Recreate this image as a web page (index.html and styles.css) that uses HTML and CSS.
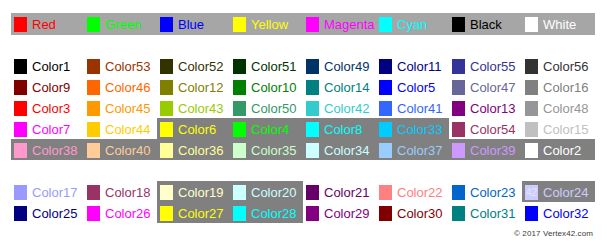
FILE: index.html
```html
<!DOCTYPE html>
<html>
<head>
<meta charset="utf-8">
<title>Excel Color Palette</title>
<link rel="stylesheet" href="styles.css">
</head>
<body>
<div class="sheet">
  <div class="grid bar">
    <div class="cell k-red"><span class="sw"></span><span class="lb">Red</span></div>
    <div class="cell k-green"><span class="sw"></span><span class="lb">Green</span></div>
    <div class="cell k-blue"><span class="sw"></span><span class="lb">Blue</span></div>
    <div class="cell k-yellow"><span class="sw"></span><span class="lb">Yellow</span></div>
    <div class="cell k-magenta"><span class="sw"></span><span class="lb">Magenta</span></div>
    <div class="cell k-cyan"><span class="sw"></span><span class="lb">Cyan</span></div>
    <div class="cell k-black"><span class="sw"></span><span class="lb">Black</span></div>
    <div class="cell k-white"><span class="sw"></span><span class="lb">White</span></div>
  </div>

  <div class="grid main">
    <div class="cell c1"><span class="sw"></span><span class="lb">Color1</span></div>
    <div class="cell c53"><span class="sw"></span><span class="lb">Color53</span></div>
    <div class="cell c52"><span class="sw"></span><span class="lb">Color52</span></div>
    <div class="cell c51"><span class="sw"></span><span class="lb">Color51</span></div>
    <div class="cell c49"><span class="sw"></span><span class="lb">Color49</span></div>
    <div class="cell c11"><span class="sw"></span><span class="lb">Color11</span></div>
    <div class="cell c55"><span class="sw"></span><span class="lb">Color55</span></div>
    <div class="cell c56"><span class="sw"></span><span class="lb">Color56</span></div>

    <div class="cell c9"><span class="sw"></span><span class="lb">Color9</span></div>
    <div class="cell c46"><span class="sw"></span><span class="lb">Color46</span></div>
    <div class="cell c12"><span class="sw"></span><span class="lb">Color12</span></div>
    <div class="cell c10"><span class="sw"></span><span class="lb">Color10</span></div>
    <div class="cell c14"><span class="sw"></span><span class="lb">Color14</span></div>
    <div class="cell c5"><span class="sw"></span><span class="lb">Color5</span></div>
    <div class="cell c47"><span class="sw"></span><span class="lb">Color47</span></div>
    <div class="cell c16"><span class="sw"></span><span class="lb">Color16</span></div>

    <div class="cell c3"><span class="sw"></span><span class="lb">Color3</span></div>
    <div class="cell c45"><span class="sw"></span><span class="lb">Color45</span></div>
    <div class="cell c43"><span class="sw"></span><span class="lb">Color43</span></div>
    <div class="cell c50"><span class="sw"></span><span class="lb">Color50</span></div>
    <div class="cell c42"><span class="sw"></span><span class="lb">Color42</span></div>
    <div class="cell c41"><span class="sw"></span><span class="lb">Color41</span></div>
    <div class="cell c13"><span class="sw"></span><span class="lb">Color13</span></div>
    <div class="cell c48"><span class="sw"></span><span class="lb">Color48</span></div>

    <div class="cell c7"><span class="sw"></span><span class="lb">Color7</span></div>
    <div class="cell c44"><span class="sw"></span><span class="lb">Color44</span></div>
    <div class="cell c6 hl"><span class="sw"></span><span class="lb">Color6</span></div>
    <div class="cell c4 hl"><span class="sw"></span><span class="lb">Color4</span></div>
    <div class="cell c8 hl"><span class="sw"></span><span class="lb">Color8</span></div>
    <div class="cell c33 hl"><span class="sw"></span><span class="lb">Color33</span></div>
    <div class="cell c54"><span class="sw"></span><span class="lb">Color54</span></div>
    <div class="cell c15"><span class="sw"></span><span class="lb">Color15</span></div>

    <div class="cell c38 hl"><span class="sw"></span><span class="lb">Color38</span></div>
    <div class="cell c40 hl"><span class="sw"></span><span class="lb">Color40</span></div>
    <div class="cell c36 hl"><span class="sw"></span><span class="lb">Color36</span></div>
    <div class="cell c35 hl"><span class="sw"></span><span class="lb">Color35</span></div>
    <div class="cell c34 hl"><span class="sw"></span><span class="lb">Color34</span></div>
    <div class="cell c37 hl"><span class="sw"></span><span class="lb">Color37</span></div>
    <div class="cell c39 hl"><span class="sw"></span><span class="lb">Color39</span></div>
    <div class="cell c2 hl"><span class="sw"></span><span class="lb">Color2</span></div>
  </div>

  <div class="grid extra">
    <div class="cell c17"><span class="sw"></span><span class="lb">Color17</span></div>
    <div class="cell c18"><span class="sw"></span><span class="lb">Color18</span></div>
    <div class="cell c19 hl"><span class="sw"></span><span class="lb">Color19</span></div>
    <div class="cell c20 hl"><span class="sw"></span><span class="lb">Color20</span></div>
    <div class="cell c21"><span class="sw"></span><span class="lb">Color21</span></div>
    <div class="cell c22"><span class="sw"></span><span class="lb">Color22</span></div>
    <div class="cell c23"><span class="sw"></span><span class="lb">Color23</span></div>
    <div class="cell c24 hl"><span class="sw"><span class="mark">42</span></span><span class="lb">Color24</span></div>

    <div class="cell c25"><span class="sw"></span><span class="lb">Color25</span></div>
    <div class="cell c26"><span class="sw"></span><span class="lb">Color26</span></div>
    <div class="cell c27 hl"><span class="sw"></span><span class="lb">Color27</span></div>
    <div class="cell c28 hl"><span class="sw"></span><span class="lb">Color28</span></div>
    <div class="cell c29"><span class="sw"></span><span class="lb">Color29</span></div>
    <div class="cell c30"><span class="sw"></span><span class="lb">Color30</span></div>
    <div class="cell c31"><span class="sw"></span><span class="lb">Color31</span></div>
    <div class="cell c32"><span class="sw"></span><span class="lb">Color32</span></div>
  </div>

  <div class="footer">© 2017 Vertex42.com</div>
</div>
</body>
</html>
```

FILE: styles.css
```css
html, body {
  margin: 0;
  padding: 0;
  background: #ffffff;
}

.sheet {
  padding: 13px 0 0 11px;
  font-family: "Liberation Sans", Arial, sans-serif;
  font-size: 13px;
}

.grid {
  display: grid;
  grid-template-columns: repeat(8, 73px);
  grid-auto-rows: 21px;
  width: 584px;
}

.bar {
  background: #a6a6a6;
  grid-auto-rows: 22px;
}

.main {
  margin-top: 20px;
}

.extra {
  margin-top: 21px;
}

.cell {
  display: flex;
  align-items: flex-start;
  gap: 5px;
  padding: 4px 0 0 3px;
  box-sizing: border-box;
  white-space: nowrap;
}

.hl {
  background: #808080;
}

.sw {
  flex: none;
  width: 13px;
  height: 15px;
  background: var(--c);
  display: flex;
  align-items: center;
  justify-content: center;
}

.lb {
  color: var(--c);
  line-height: 15px;
}

.mark {
  color: #e4e4ff;
  font-size: 10px;
  line-height: 15px;
}

.footer {
  width: 582px;
  margin-top: 6px;
  text-align: right;
  font-size: 8px;
  line-height: 10px;
  color: #3a3a3a;
  letter-spacing: 0.1px;
}

.k-red { --c: #ff0000; }
.k-green { --c: #00ff00; }
.k-blue { --c: #0000ff; }
.k-yellow { --c: #ffff00; }
.k-magenta { --c: #ff00ff; }
.k-cyan { --c: #00ffff; }
.k-black { --c: #000000; }
.k-white { --c: #ffffff; }

.c1 { --c: #000000; }
.c2 { --c: #ffffff; }
.c3 { --c: #ff0000; }
.c4 { --c: #00ff00; }
.c5 { --c: #0000ff; }
.c6 { --c: #ffff00; }
.c7 { --c: #ff00ff; }
.c8 { --c: #00ffff; }
.c9 { --c: #800000; }
.c10 { --c: #008000; }
.c11 { --c: #000080; }
.c12 { --c: #808000; }
.c13 { --c: #800080; }
.c14 { --c: #008080; }
.c15 { --c: #c0c0c0; }
.c16 { --c: #808080; }
.c17 { --c: #9999ff; }
.c18 { --c: #993366; }
.c19 { --c: #ffffcc; }
.c20 { --c: #ccffff; }
.c21 { --c: #660066; }
.c22 { --c: #ff8080; }
.c23 { --c: #0066cc; }
.c24 { --c: #ccccff; }
.c25 { --c: #000080; }
.c26 { --c: #ff00ff; }
.c27 { --c: #ffff00; }
.c28 { --c: #00ffff; }
.c29 { --c: #800080; }
.c30 { --c: #800000; }
.c31 { --c: #008080; }
.c32 { --c: #0000ff; }
.c33 { --c: #00ccff; }
.c34 { --c: #ccffff; }
.c35 { --c: #ccffcc; }
.c36 { --c: #ffff99; }
.c37 { --c: #99ccff; }
.c38 { --c: #ff99cc; }
.c39 { --c: #cc99ff; }
.c40 { --c: #ffcc99; }
.c41 { --c: #3366ff; }
.c42 { --c: #33cccc; }
.c43 { --c: #99cc00; }
.c44 { --c: #ffcc00; }
.c45 { --c: #ff9900; }
.c46 { --c: #ff6600; }
.c47 { --c: #666699; }
.c48 { --c: #969696; }
.c49 { --c: #003366; }
.c50 { --c: #339966; }
.c51 { --c: #003300; }
.c52 { --c: #333300; }
.c53 { --c: #993300; }
.c54 { --c: #993366; }
.c55 { --c: #333399; }
.c56 { --c: #333333; }
```
